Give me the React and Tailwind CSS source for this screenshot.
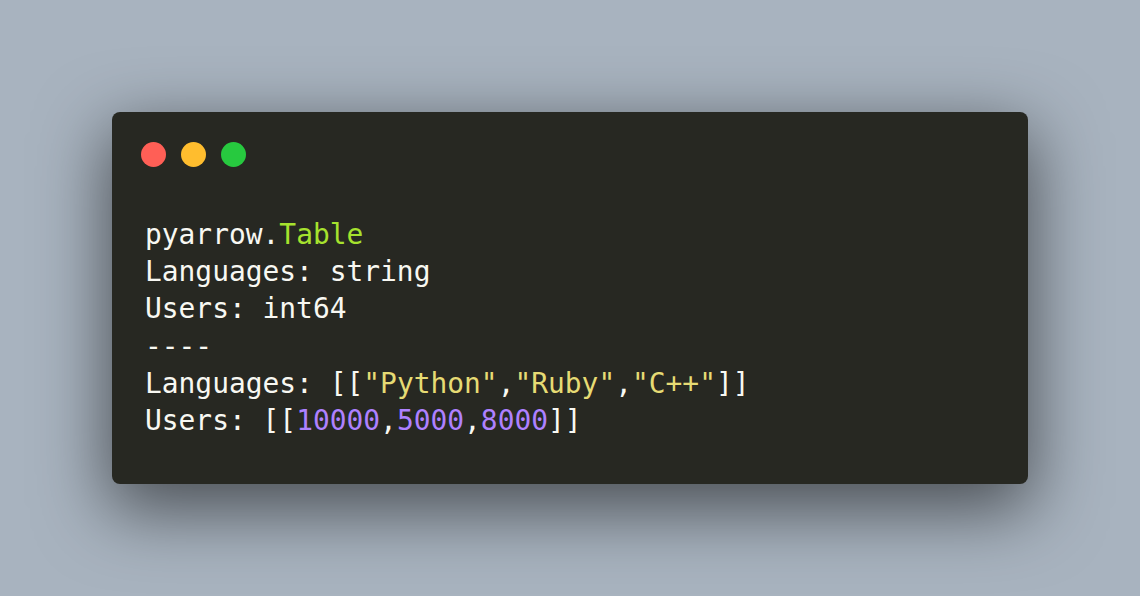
export default function App() {
  const mono = { fontFamily: '"DejaVu Sans Mono", "Liberation Mono", monospace' };
  return (
    <div className="w-[1140px] h-[596px] bg-[#a8b3bf] flex items-start justify-center pt-[112px]">
      <div className="w-[916px] h-[372px] bg-[#272822] rounded-[8px] shadow-[0_22px_70px_4px_rgba(0,0,0,0.56)] flex flex-col pt-[30px] pl-[29px]">
        <div className="flex gap-[15px]">
          <div className="w-[25px] h-[25px] rounded-full bg-[#ff5f56]" />
          <div className="w-[25px] h-[25px] rounded-full bg-[#ffbd2e]" />
          <div className="w-[25px] h-[25px] rounded-full bg-[#27c93f]" />
        </div>
        <pre
          className="mt-[49px] ml-[4px] text-[27.9px] leading-[37.2px] text-[#f8f8f2]"
          style={mono}
        >
          <div>pyarrow.<span className="text-[#a6e22e]">Table</span></div>
          <div>Languages: string</div>
          <div>Users: int64</div>
          <div>----</div>
          <div>
            Languages: [[<span className="text-[#e6db74]">"Python"</span>,<span className="text-[#e6db74]">"Ruby"</span>,<span className="text-[#e6db74]">"C++"</span>]]
          </div>
          <div>
            Users: [[<span className="text-[#ae81ff]">10000</span>,<span className="text-[#ae81ff]">5000</span>,<span className="text-[#ae81ff]">8000</span>]]
          </div>
        </pre>
      </div>
    </div>
  );
}
